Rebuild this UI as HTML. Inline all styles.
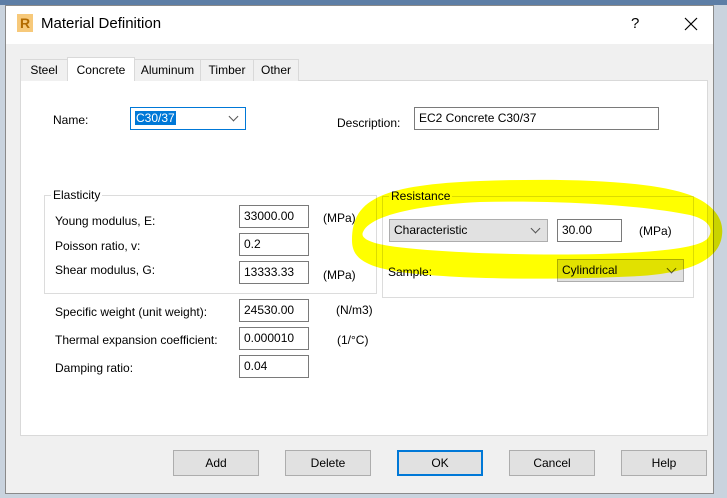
<!DOCTYPE html>
<html><head><style>
*{box-sizing:border-box;margin:0;padding:0}
body{width:727px;height:498px;background:#c9d3de;position:relative;overflow:hidden;font-family:"Liberation Sans",sans-serif;font-size:12px;color:#000}
.a{position:absolute}
.dlg{left:5px;top:5px;width:709px;height:489px;background:#f0f0f0;border:1px solid #8a8a8a}
.title{left:0;top:0;width:707px;height:38px;background:#fff}
.page{left:20px;top:80px;width:688px;height:356px;background:#fff;border:1px solid #d9d9d9}
.tab{top:59px;height:22px;border:1px solid #d9d9d9;border-bottom:none;background:#f0f0f0;text-align:center;line-height:21px;font-size:12px}
.inp{background:#fff;border:1px solid #7a7a7a;height:23px;line-height:21px;padding-left:4px}
.grp{border:1px solid #dcdcdc}
.lg{background:#fff;padding:0 2px}
.combo{background:#e1e1e1;border:1px solid #adadad;height:23px;line-height:21px;padding-left:4px}
.btn{top:450px;height:26px;width:86px;background:#e1e1e1;border:1px solid #adadad;text-align:center;line-height:24px}
.chev{position:absolute;right:8px;top:5px;width:7px;height:7px;border-right:1px solid #555;border-bottom:1px solid #555;transform:rotate(45deg)}
</style></head><body>
<div class="a" style="left:0;top:0;width:727px;height:5px;background:#5d7ea6"></div>
<div class="a dlg"></div>
<div class="a title" style="left:6px;top:6px"></div>
<div class="a" style="left:17px;top:14px;width:16px;height:18px;background:#f7c97a;color:#b36b00;font-weight:bold;font-size:14px;line-height:18px;text-align:center">R</div>
<div class="a" style="left:41px;top:15px;font-size:15px">Material Definition</div>
<div class="a" style="left:631px;top:15px;font-size:15px">?</div>
<svg class="a" style="left:684px;top:17px" width="14" height="14"><path d="M1 1L13 13M13 1L1 13" stroke="#000" stroke-width="1.2"/></svg>
<div class="a page"></div>
<div class="a tab" style="left:20px;width:48px">Steel</div>
<div class="a tab" style="left:67px;top:57px;height:24px;width:68px;background:#fff;line-height:24px">Concrete</div>
<div class="a tab" style="left:134px;width:67px">Aluminum</div>
<div class="a tab" style="left:200px;width:54px">Timber</div>
<div class="a tab" style="left:253px;width:46px">Other</div>

<div class="a" style="left:53px;top:113px">Name:</div>
<div class="a inp" style="left:130px;top:107px;width:116px;border:1px solid #0078d7"><span style="background:#0078d7;color:#fff;padding:0 1px">C30/37</span><div class="chev"></div></div>
<div class="a" style="left:337px;top:116px">Description:</div>
<div class="a inp" style="left:414px;top:107px;width:245px">EC2 Concrete C30/37</div>

<div class="a grp" style="left:44px;top:195px;width:333px;height:99px"></div>
<div class="a lg" style="left:51px;top:188px">Elasticity</div>
<div class="a" style="left:55px;top:214px">Young modulus, E:</div>
<div class="a" style="left:55px;top:239px">Poisson ratio, v:</div>
<div class="a" style="left:55px;top:263px">Shear modulus, G:</div>
<div class="a inp" style="left:239px;top:205px;width:70px">33000.00</div>
<div class="a inp" style="left:239px;top:233px;width:70px">0.2</div>
<div class="a inp" style="left:239px;top:261px;width:70px">13333.33</div>
<div class="a" style="left:323px;top:211px">(MPa)</div>
<div class="a" style="left:323px;top:268px">(MPa)</div>
<div class="a" style="left:55px;top:305px">Specific weight (unit weight):</div>
<div class="a" style="left:55px;top:333px">Thermal expansion coefficient:</div>
<div class="a" style="left:55px;top:361px">Damping ratio:</div>
<div class="a inp" style="left:239px;top:299px;width:70px">24530.00</div>
<div class="a inp" style="left:239px;top:327px;width:70px">0.000010</div>
<div class="a inp" style="left:239px;top:355px;width:70px">0.04</div>
<div class="a" style="left:336px;top:303px">(N/m3)</div>
<div class="a" style="left:337px;top:333px">(1/°C)</div>

<div class="a grp" style="left:382px;top:196px;width:312px;height:102px"></div>
<div class="a lg" style="left:389px;top:189px">Resistance</div>
<div class="a combo" style="left:389px;top:219px;width:159px">Characteristic<div class="chev"></div></div>
<div class="a inp" style="left:557px;top:219px;width:65px">30.00</div>
<div class="a" style="left:639px;top:224px">(MPa)</div>
<div class="a" style="left:388px;top:265px">Sample:</div>
<div class="a combo" style="left:557px;top:259px;width:127px">Cylindrical<div class="chev"></div></div>

<svg class="a" style="left:0;top:0;mix-blend-mode:multiply" width="727" height="498">
<path fill-rule="evenodd" fill="#ffff00" d="M352 240 C352 200 380 185 480 181 C560 178 650 180 690 195 C715 205 724 220 722 235 C720 255 700 272 640 276 C560 280 460 280 400 272 C360 266 352 255 352 240 Z M363 232 C370 215 420 205 480 202 C560 200 640 205 690 215 C710 220 714 230 708 238 C700 248 660 252 600 254 C520 256 430 252 390 246 C370 243 360 238 363 232 Z"/>
</svg>

<div class="a btn" style="left:173px">Add</div>
<div class="a btn" style="left:285px">Delete</div>
<div class="a btn" style="left:397px;border:2px solid #0078d7;line-height:22px">OK</div>
<div class="a btn" style="left:509px">Cancel</div>
<div class="a btn" style="left:621px">Help</div>
</body></html>
